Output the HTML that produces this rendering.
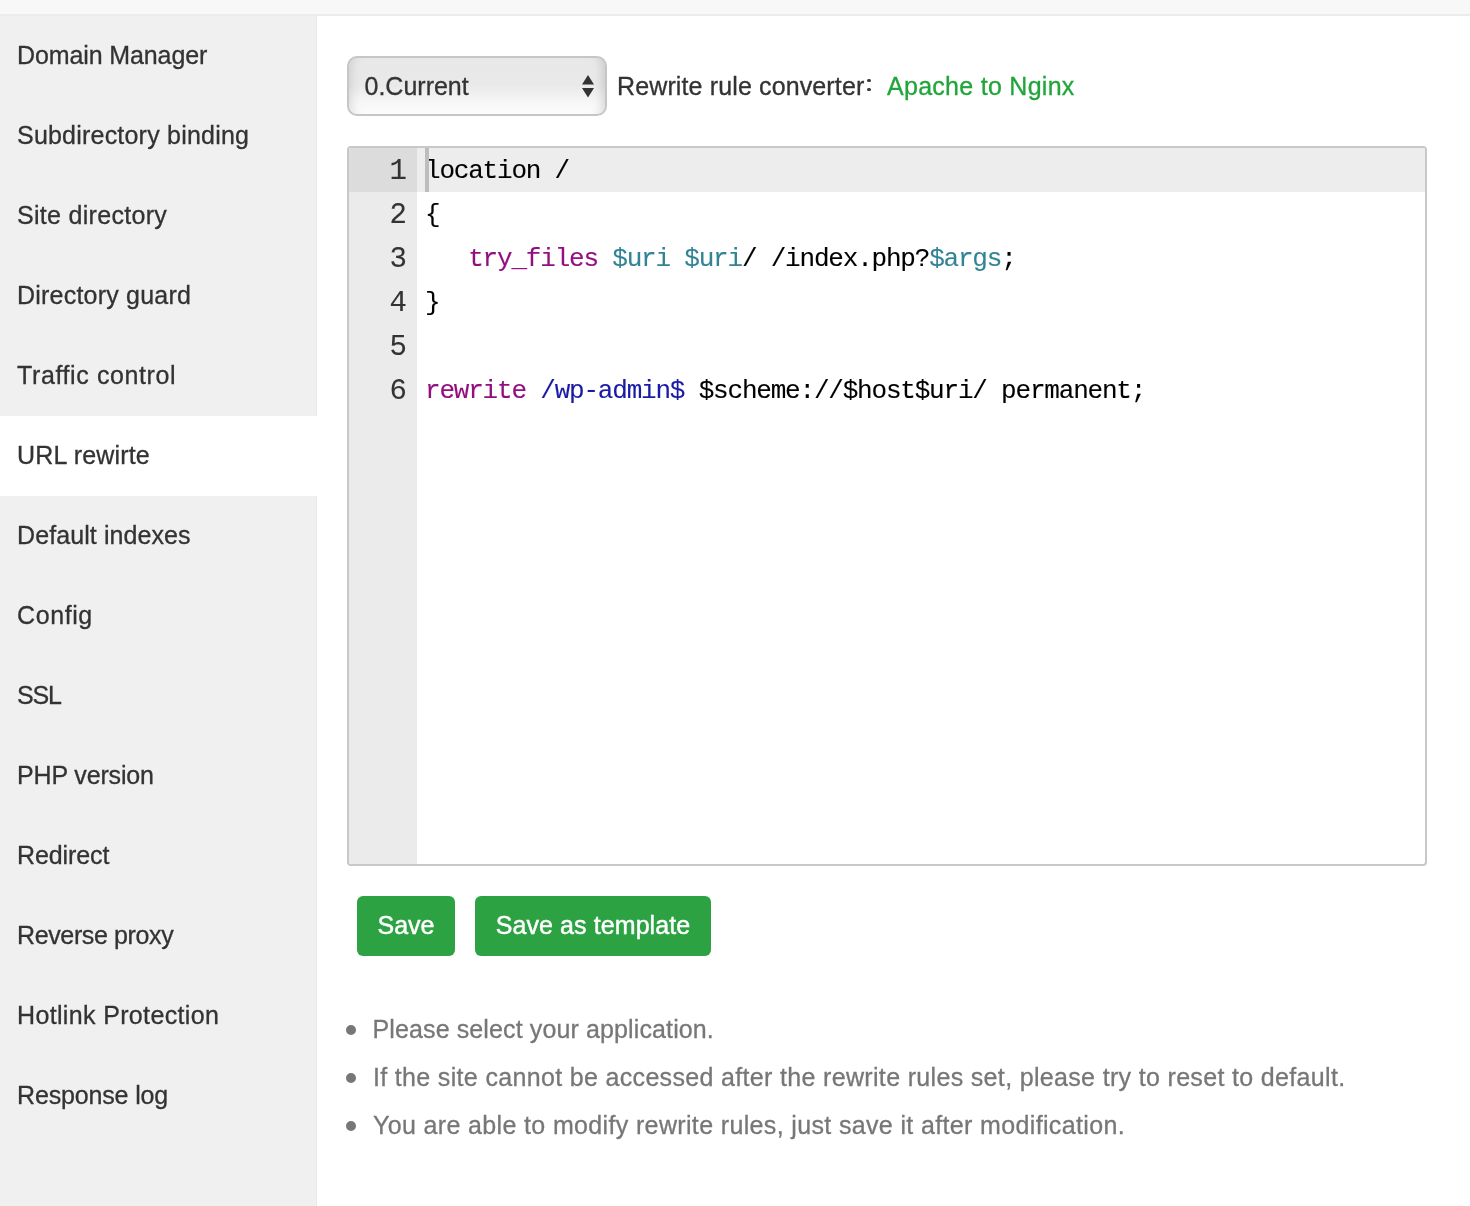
<!DOCTYPE html>
<html>
<head>
<meta charset="utf-8">
<style>
html,body{margin:0;padding:0;}
body{width:1470px;height:1206px;overflow:hidden;background:#fff;position:relative;-webkit-font-smoothing:antialiased;-webkit-text-stroke:0.3px currentColor;font-family:"Liberation Sans",sans-serif;}
.topbar{position:absolute;left:0;top:0;width:1470px;height:14px;background:#f8f8f8;border-bottom:2px solid #ececec;}
.side{position:absolute;left:0;top:16px;width:317px;height:1190px;background:#f0f0f0;box-shadow:inset -1px 0 #ebebeb;}
.side div{height:79px;line-height:78px;padding-bottom:1px;padding-left:17px;font-size:25px;color:#333;white-space:nowrap;}
.side div.on{background:#fff;}
.sel{position:absolute;left:347px;top:56px;width:256px;height:56px;border:2px solid #c6c6c6;border-radius:10px;
 background:linear-gradient(#e8e8e8 0%,#e9e9e9 48%,#ececec 55%,#f5f5f5 75%,#fcfcfc 100%);
 box-shadow:inset 12px 0 10px -9px rgba(0,0,0,.10),inset -12px 0 10px -9px rgba(0,0,0,.13);}
.sel .t{position:absolute;left:15.5px;top:0;line-height:56px;font-size:25px;color:#333;}
.lbl{position:absolute;left:617px;top:56px;line-height:60px;font-size:25px;color:#333;white-space:nowrap;letter-spacing:0.13px;}
.lbl2{position:absolute;left:887px;top:56px;line-height:60px;font-size:25px;color:#20a53a;white-space:nowrap;letter-spacing:0.28px;}
.cdot{position:absolute;left:867.2px;width:3.6px;height:3.6px;border-radius:50%;background:#3a3a3a;}
.ed{-webkit-text-stroke:0.1px currentColor;position:absolute;left:347px;top:146px;width:1076px;height:716px;border:2px solid #c8c8c8;border-radius:4px;overflow:hidden;background:#fff;}
.gut{position:absolute;left:0;top:0;width:68px;height:716px;background:#ebebeb;}
.gl{position:absolute;left:0;width:58px;height:44px;line-height:44px;padding-top:1.5px;text-align:right;font-family:"Liberation Mono",monospace;font-size:29px;color:#333;}
.act{position:absolute;left:68px;top:0;width:1008px;height:44px;background:#ededed;}
.gact{position:absolute;left:0;top:0;width:68px;height:44px;background:#dcdcdc;}
.cur{position:absolute;left:76px;top:0;width:4px;height:44px;background:#bdbdbd;}
.ln{position:absolute;left:76px;height:44px;line-height:44px;padding-top:1px;font-family:"Liberation Mono",monospace;font-size:26px;letter-spacing:-1.2px;color:#000;white-space:pre;}
.k{color:#930f80;}
.v{color:#318495;}
.s{color:#1a1aa6;}
.btn{-webkit-text-stroke:0.45px #fff;position:absolute;top:896px;height:59px;line-height:58px;padding-bottom:1px;background:#2ca243;color:#fff;border-radius:6px;font-size:25px;text-align:center;}
.tips{position:absolute;left:373px;font-size:25px;color:#777;white-space:nowrap;line-height:48px;}
.dot{position:absolute;left:346px;width:10px;height:10px;border-radius:50%;background:#777;}
</style>
</head>
<body>
<div style="position:absolute;left:0;top:0;width:1470px;height:1206px;will-change:transform">
<div class="topbar"></div>
<div class="side">
<div style="letter-spacing:-0.11px">Domain Manager</div>
<div style="letter-spacing:0.21px">Subdirectory binding</div>
<div style="letter-spacing:0.3px">Site directory</div>
<div style="letter-spacing:0.21px">Directory guard</div>
<div style="letter-spacing:0.61px">Traffic control</div>
<div class="on" style="letter-spacing:0.16px">URL rewirte</div>
<div style="letter-spacing:0.09px">Default indexes</div>
<div style="letter-spacing:0.6px">Config</div>
<div style="letter-spacing:-1.2px">SSL</div>
<div style="letter-spacing:-0.15px">PHP version</div>
<div style="letter-spacing:-0.09px">Redirect</div>
<div style="letter-spacing:-0.37px">Reverse proxy</div>
<div style="letter-spacing:0.35px">Hotlink Protection</div>
<div style="letter-spacing:-0.15px">Response log</div>
</div>

<div class="sel"><span class="t">0.Current</span>
<svg style="position:absolute;left:232.5px;top:17px" width="12" height="23" viewBox="0 0 12 23"><path d="M6 0 L12 9.5 L0 9.5 Z M0 13 L12 13 L6 22.5 Z" fill="#333"/></svg>
</div>
<div class="lbl">Rewrite rule converter</div>
<div class="cdot" style="top:78.8px"></div><div class="cdot" style="top:87.7px"></div>
<div class="lbl2">Apache to Nginx</div>

<div class="ed">
 <div class="gut"></div>
 <div class="gact"></div>
 <div class="act"></div>
 <div class="gl" style="top:0">1</div>
 <div class="gl" style="top:44px">2</div>
 <div class="gl" style="top:88px">3</div>
 <div class="gl" style="top:132px">4</div>
 <div class="gl" style="top:176px">5</div>
 <div class="gl" style="top:220px">6</div>
 <div class="ln" style="top:0">location /</div>
 <div class="ln" style="top:44px">{</div>
 <div class="ln" style="top:88px">   <span class="k">try_files</span> <span class="v">$uri</span> <span class="v">$uri</span>/ /index.php?<span class="v">$args</span>;</div>
 <div class="ln" style="top:132px">}</div>
 <div class="ln" style="top:220px"><span class="k">rewrite</span> <span class="s">/wp-admin$</span> $scheme://$host$uri/ permanent;</div>
 <div class="cur"></div>
</div>

<div class="btn" style="left:357px;width:98px;">Save</div>
<div class="btn" style="left:475px;width:236px;letter-spacing:0.09px">Save as template</div>

<div class="dot" style="top:1025px"></div>
<div class="dot" style="top:1073px"></div>
<div class="dot" style="top:1121px"></div>
<div class="tips" style="top:1005px;letter-spacing:0.12px;left:372.5px">Please select your application.</div>
<div class="tips" style="top:1053px;letter-spacing:0.333px">If the site cannot be accessed after the rewrite rules set, please try to reset to default.</div>
<div class="tips" style="top:1101px;letter-spacing:0.354px">You are able to modify rewrite rules, just save it after modification.</div>
</div>
</body>
</html>
